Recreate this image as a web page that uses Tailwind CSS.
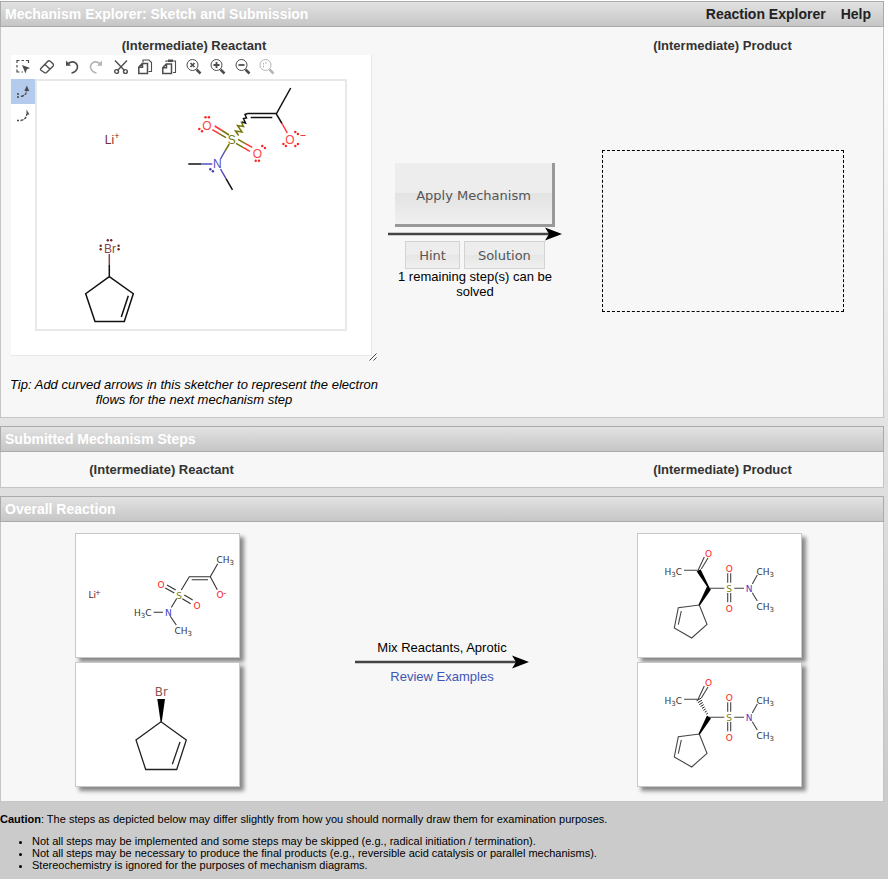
<!DOCTYPE html>
<html lang="en">
<head>
    <meta charset="UTF-8">
    <meta name="viewport" content="width=device-width, initial-scale=1.0">
    <title>Mechanism Explorer</title>
    <script src="https://cdn.jsdelivr.net/npm/@tailwindcss/browser@4"></script>
</head>
<body class="min-h-screen bg-linear-to-b from-white to-[#cbcbcb] to-90% pt-px font-['Liberation_Sans',Arial,sans-serif] text-[13px] leading-[15px] text-black">

    <!-- Shared drawings -->
    <svg class="hidden">
        <symbol id="arrow" viewBox="0 0 174 14">
            <path d="M0 7H162" stroke="#444" stroke-width="2.4"/>
            <path d="M157 0.5L174 7L157 13.5L161 7Z" fill="#000"/>
        </symbol>
        <symbol id="product" viewBox="0 0 163 123">
            <g stroke="#444" stroke-width="1.1" fill="none">
                <path d="M60.3 35.7L66.3 23M63.3 35L70 24M46 36.3H60.7M71 54.3H86.3M96.3 54.3H106"/>
                <path d="M89.7 39.3V48.7M92.7 39.3V48.7M89.7 59V68.3M92.7 59V68.3"/>
                <path d="M114.3 50L119.3 41M114.3 58.7L119.3 67"/>
                <path d="M61.3 71L69 90.3L53.7 104L36.3 94L40.3 73.7ZM43.3 77L40.3 90.7"/>
            </g>
            <path d="M69 52.5L73 55.5L61.8 71.5L60.5 70.7Z" fill="#000"/>
            <g font-family="DejaVu Sans, sans-serif" font-size="9" fill="#333">
                <text x="26.5" y="40.5">H<tspan font-size="7" dy="2">3</tspan><tspan dy="-2">C</tspan></text>
                <text x="118.5" y="40.5">CH<tspan font-size="7" dy="2">3</tspan></text>
                <text x="118.5" y="75.5">CH<tspan font-size="7" dy="2">3</tspan></text>
                <g text-anchor="middle">
                    <text x="70.5" y="22.5" fill="#ff2020">O</text>
                    <text x="91.3" y="37.5" fill="#ff2020">O</text>
                    <text x="91.3" y="78" fill="#ff2020">O</text>
                    <text x="91.2" y="57.5" fill="#808010">S</text>
                    <text x="111.2" y="57.5" fill="#4040c0">N</text>
                </g>
            </g>
        </symbol>
    </svg>

    <main class="mr-1">
        <!-- Sketch and submission -->
        <section>
            <header class="flex h-[26px] items-center justify-between border border-[#aaa] bg-linear-to-b from-[#e2e2e2] to-[#c6c6c6] pr-3 pl-1 text-[14px] font-bold">
                <h1 class="text-white">Mechanism Explorer: Sketch and Submission</h1>
                <nav class="flex gap-[15px] text-[#222]">
                    <a href="#">Reaction Explorer</a>
                    <a href="#">Help</a>
                </nav>
            </header>
            <div class="grid grid-cols-[377px_174px_1fr] gap-y-0.5 border-x border-b border-[#c5c5c5] bg-[#f7f7f7] pt-[11px] pb-[10px] pl-[10px]">
                <h2 class="mr-[11px] text-center font-bold text-[#333]">(Intermediate) Reactant</h2>
                <span></span>
                <h2 class="text-center font-bold text-[#333]">(Intermediate) Product</h2>

                <div class="mr-[11px]">
                    <div class="relative pr-[5px] pb-[5px]">
                        <div class="border-r border-b border-[#e8e8e8] bg-white pb-[24px]">
                            <div class="flex w-[268px] justify-between text-[#4d4d4d]">
                                <button class="grid size-6 place-items-center" aria-label="Select">
                                    <svg class="size-4" viewBox="0 0 16 16" fill="none" stroke="currentColor">
                                        <path d="M2 4V1.5H4.5M6.5 1.5H9M11 1.5H13.5V4M2 6V8.5M2 10.5V13H4.5M6.5 13H8" stroke-width="1.2"/>
                                        <path d="M7 6L15 9L11.7 10.5L10.5 14.5Z" fill="currentColor" stroke="none"/>
                                    </svg>
                                </button>
                                <button class="grid size-6 place-items-center" aria-label="Erase">
                                    <svg class="size-4" viewBox="0 0 16 16" fill="none" stroke="currentColor" stroke-width="1.4">
                                        <path d="M1.8 9.5L8.8 2.3Q10 1.3 11.2 2.3L14 4.8Q15 6 14 7.2L7.5 13.5Q6.5 14.3 5.3 13.5L2 11.3Q1 10.4 1.8 9.500ZM6 5.5L10.8 10"/>
                                    </svg>
                                </button>
                                <button class="grid size-6 place-items-center" aria-label="Undo">
                                    <svg class="size-4" viewBox="0 0 16 16" fill="none" stroke="currentColor" stroke-width="1.6">
                                        <path d="M3.5 5Q8 1.5 11.5 3.8Q14.5 6.5 13 10Q11.5 13.5 7.5 14"/>
                                        <path d="M2 1.5V6.8H7Z" fill="currentColor" stroke="none"/>
                                    </svg>
                                </button>
                                <button class="grid size-6 place-items-center text-[#b5b5b5]" aria-label="Redo" disabled>
                                    <svg class="size-4" viewBox="0 0 16 16" fill="none" stroke="currentColor" stroke-width="1.6">
                                        <path d="M12.5 5Q8 1.5 4.5 3.8Q1.5 6.5 3 10Q4.5 13.5 8.5 14"/>
                                        <path d="M14 1.5V6.8H9Z" fill="currentColor" stroke="none"/>
                                    </svg>
                                </button>
                                <button class="grid size-6 place-items-center" aria-label="Cut">
                                    <svg class="size-4" viewBox="0 0 16 16" fill="none" stroke="currentColor" stroke-width="1.4">
                                        <path d="M2 1.5L11.5 11.5M14 1.5L4.5 11.5"/>
                                        <circle cx="3.600" cy="12.500" r="1.900"/>
                                        <circle cx="12.400" cy="12.500" r="1.900"/>
                                    </svg>
                                </button>
                                <button class="grid size-6 place-items-center" aria-label="Copy">
                                    <svg class="size-4" viewBox="0 0 16 16" fill="none" stroke="currentColor" stroke-width="1.1">
                                        <path d="M6 3.5V1H12L14.5 3.5V12.5H11.5"/>
                                        <path d="M5.300 4.500H10.500V14.500H1.800V8ZM5.500 5V8.200H1.800" stroke-width="1.500"/>
                                    </svg>
                                </button>
                                <button class="grid size-6 place-items-center" aria-label="Paste">
                                    <svg class="size-4" viewBox="0 0 16 16" fill="none" stroke="currentColor" stroke-width="1.1">
                                        <path d="M5 3V2H14.500V13.500H12"/>
                                        <path d="M7 0.500H12V3H7Z" fill="currentColor" stroke="none"/>
                                        <path d="M5.300 5H10.500V14.500H1.800V8.500ZM5.500 5.500V8.700H1.800" stroke-width="1.500"/>
                                    </svg>
                                </button>
                                <button class="grid size-6 place-items-center" aria-label="Zoom reset">
                                    <svg class="size-4" viewBox="0 0 16 16" fill="none" stroke="currentColor">
                                        <circle cx="6.500" cy="6" r="5.500"/>
                                        <path d="M4.500 4L8.500 8M8.500 4L4.500 8" stroke-width="1.700"/>
                                        <path d="M10.500 10.500L14.500 14.500" stroke-width="2.500"/>
                                    </svg>
                                </button>
                                <button class="grid size-6 place-items-center" aria-label="Zoom in">
                                    <svg class="size-4" viewBox="0 0 16 16" fill="none" stroke="currentColor">
                                        <circle cx="6.500" cy="6" r="5.500"/>
                                        <path d="M3.500 6H9.500M6.500 3V9" stroke-width="1.800"/>
                                        <path d="M10.500 10.500L14.500 14.500" stroke-width="2.500"/>
                                    </svg>
                                </button>
                                <button class="grid size-6 place-items-center" aria-label="Zoom out">
                                    <svg class="size-4" viewBox="0 0 16 16" fill="none" stroke="currentColor">
                                        <circle cx="6.500" cy="6" r="5.500"/>
                                        <path d="M3.500 6H9.500" stroke-width="1.800"/>
                                        <path d="M10.500 10.500L14.500 14.500" stroke-width="2.500"/>
                                    </svg>
                                </button>
                                <button class="grid size-6 place-items-center text-[#b5b5b5]" aria-label="Zoom to selection" disabled>
                                    <svg class="size-4" viewBox="0 0 16 16" fill="none" stroke="currentColor">
                                        <circle cx="6.500" cy="6" r="5.500"/>
                                        <path d="M4.500 8.500V4H9" stroke-dasharray="2 1"/>
                                        <path d="M10.500 10.500L14.500 14.500" stroke-width="2.500"/>
                                    </svg>
                                </button>
                            </div>
                            <div class="flex">
                                <div class="flex w-6 flex-col text-[#4d4d4d]">
                                    <button class="grid h-[25px] w-6 place-items-center bg-[#b5cbed]" aria-label="Electron pair arrow">
                                        <svg class="size-4" viewBox="0 0 16 16" fill="none" stroke="currentColor">
                                            <path d="M6 12.500Q11.500 11.500 11.800 6" stroke-width="1.400" stroke-dasharray="3 1"/>
                                            <path d="M11.800 1.500L14.300 7H9.300Z" fill="currentColor" stroke="none"/>
                                            <path d="M3 9V11M3 12V14" stroke-width="1.600"/>
                                        </svg>
                                    </button>
                                    <button class="grid size-6 place-items-center" aria-label="Single electron arrow">
                                        <svg class="size-4" viewBox="0 0 16 16" fill="none" stroke="currentColor">
                                            <path d="M5.500 12.500Q11.500 11.500 11.800 6" stroke-width="1.400" stroke-dasharray="3 1"/>
                                            <path d="M11.500 1.500L14.500 6.500H11.500Z" fill="currentColor" stroke="none"/>
                                            <path d="M2 12.500H4" stroke-width="1.600"/>
                                        </svg>
                                    </button>
                                </div>
                                <svg class="h-[252px] w-[312px] border-2 border-[#e8e8e8]" viewBox="37 81 308 248" fill="none" role="img" aria-label="Reactant sketch">
                                    <!-- sulfonamide enolate -->
                                    <g stroke-width="1.500">
                                        <g stroke="#111">
                                            <path d="M290.700 88L276.300 114L282 123.500M247.300 113.500H276.300M250.700 117.600H272.300"/>
                                            <path d="M201 164H188.300M226 178.700L232.500 189.800"/>
                                            <path d="M242 122L245.500 123L243.500 118.500L246.500 118L245 114.500L247.500 113.500"/>
                                        </g>
                                        <g stroke="#f33">
                                            <path d="M282 123.500L287.300 133M214.700 126L222 130.500M212.300 129.700L219 133.700"/>
                                            <path d="M245 143.300L252.300 147.300M243 147.300L250 151.300"/>
                                        </g>
                                        <g stroke="#76760c">
                                            <path d="M222 130.500L229 135M219 133.700L226 137.700M238 139.300L245 143.300M236 143.300L243 147.300M229.300 144L225 151"/>
                                            <path d="M238.700 135.500L235.500 131L242 132L237.500 125.500L243.500 126.500L241 121.500"/>
                                        </g>
                                        <path d="M225 151L220.500 159M212.300 164H201M220.500 169L226 178.700" stroke="#5050c0"/>
                                    </g>
                                    <g font-family="Liberation Sans, Arial, sans-serif" font-size="12" text-anchor="middle">
                                        <text x="207" y="129.500" fill="#f44">O</text>
                                        <text x="257.300" y="158" fill="#f44">O</text>
                                        <text x="290" y="143.500" fill="#f44">O</text>
                                        <text x="231.700" y="144" fill="#76760c">S</text>
                                        <text x="217.300" y="168" fill="#5050c0">N</text>
                                        <text x="109.500" y="143.500" fill="#7a3030">Li</text>
                                        <text x="117" y="139" font-size="9" fill="#7a3030">+</text>
                                        <text x="110" y="252.500" fill="#8c4545">Br</text>
                                    </g>
                                    <path d="M300.500 135.500H305.500" stroke="#f33"/>
                                    <g fill="#f22">
                                        <circle cx="205.500" cy="117.300" r="1.200"/><circle cx="208.900" cy="117.300" r="1.200"/>
                                        <circle cx="199.300" cy="129" r="1.200"/><circle cx="202" cy="131.300" r="1.200"/>
                                        <circle cx="262.300" cy="146" r="1.200"/><circle cx="265" cy="148" r="1.200"/>
                                        <circle cx="255.700" cy="160.700" r="1.200"/><circle cx="259" cy="160.700" r="1.200"/>
                                        <circle cx="295.300" cy="132" r="1.200"/><circle cx="297.900" cy="134" r="1.200"/>
                                        <circle cx="283.400" cy="144" r="1.200"/><circle cx="285.900" cy="146" r="1.200"/>
                                        <circle cx="295.300" cy="146" r="1.200"/><circle cx="297.900" cy="144" r="1.200"/>
                                    </g>
                                    <g fill="#4040b0">
                                        <circle cx="210.300" cy="169.200" r="1.200"/><circle cx="212.900" cy="171.300" r="1.200"/>
                                    </g>
                                    <!-- bromocyclopentene -->
                                    <path d="M109.300 254V265" stroke="#8c4545" stroke-width="1.500"/>
                                    <path d="M109.300 265V276.700L133.300 293.700L124.300 321.500H95L85.700 293.700L109.300 276.700M128.300 295.700L121.300 317" stroke="#111" stroke-width="1.500"/>
                                    <g fill="#702828">
                                        <circle cx="107.800" cy="240.300" r="1.200"/><circle cx="111.200" cy="240.300" r="1.200"/>
                                        <circle cx="100.700" cy="245.700" r="1.200"/><circle cx="100.700" cy="249.200" r="1.200"/>
                                        <circle cx="118.600" cy="245.700" r="1.200"/><circle cx="118.600" cy="249.200" r="1.200"/>
                                    </g>
                                </svg>
                            </div>
                        </div>
                        <svg class="absolute right-0 bottom-0 size-2" viewBox="0 0 8 8" stroke="#444"><path d="M0.500 7.500L7.500 0.500M4.500 7.500L7.500 4.500"/></svg>
                    </div>
                    <p class="-mx-2 mt-4 text-center italic">Tip: Add curved arrows in this sketcher to represent the electron flows for the next mechanism step</p>
                </div>

                <div class="flex flex-col items-center self-center text-center font-['DejaVu_Sans',Verdana,sans-serif]">
                    <button class="h-16 w-40 border-r-3 border-b-3 border-[#999] bg-linear-to-b from-[#ededed] from-50% via-[#e3e3e3] via-50% to-[#f0f0f0] pt-1 text-[#555]">Apply Mechanism</button>
                    <svg class="h-3.5 w-full"><use href="#arrow"/></svg>
                    <div class="flex gap-1 text-[#555]">
                        <button class="h-7 border border-[#d3d3d3] bg-linear-to-b from-[#ededed] from-50% via-[#e6e6e6] via-50% to-[#f0f0f0] px-[13px]">Hint</button>
                        <button class="h-7 border border-[#d3d3d3] bg-linear-to-b from-[#ededed] from-50% via-[#e6e6e6] via-50% to-[#f0f0f0] px-[13px]">Solution</button>
                    </div>
                    <p class="font-['Liberation_Sans',Arial,sans-serif]">1 remaining step(s) can be solved</p>
                </div>

                <div class="h-[162px] w-[242px] self-center justify-self-center border border-dashed border-black"></div>
            </div>
        </section>

        <!-- Submitted steps -->
        <section class="mt-2">
            <header class="flex h-[26px] items-center border border-[#aaa] bg-linear-to-b from-[#e2e2e2] to-[#c6c6c6] pl-1">
                <h1 class="text-[14px] font-bold text-white">Submitted Mechanism Steps</h1>
            </header>
            <div class="grid grid-cols-[1fr_240px_1fr] border-x border-b border-[#c5c5c5] bg-[#f7f7f7] pt-[10px] pb-[10px] text-center font-bold text-[#333]">
                <h2>(Intermediate) Reactant</h2>
                <span></span>
                <h2>(Intermediate) Product</h2>
            </div>
        </section>

        <!-- Overall reaction -->
        <section class="mt-2">
            <header class="flex h-[26px] items-center border border-[#aaa] bg-linear-to-b from-[#e2e2e2] to-[#c6c6c6] pl-1">
                <h1 class="text-[14px] font-bold text-white">Overall Reaction</h1>
            </header>
            <div class="grid grid-cols-[1fr_240px_1fr] items-center border-x border-b border-[#c5c5c5] bg-[#f7f7f7] pt-[11px] pb-[14px]">
                <div class="mr-2 flex flex-col items-center gap-1">
                    <svg class="h-[125px] w-[165px] border border-[#c8c8c8] bg-white shadow-[4px_4px_4px_#888]" viewBox="0 0 163 123" role="img" aria-label="Lithium enolate">
                        <path d="M141.700 29.700L134.300 42.700L141.300 55.700M134.300 42.700H113.300L105.300 56M115.700 45.700H132M100.700 64.500L95.300 73.500M87 78.300H77.700M94.300 82.300L100.300 91M91 51L99.700 56M89.300 54L98.300 59M108.300 61L116.700 66M106.300 64.700L114.700 69.700" stroke="#333" stroke-width="1.100" fill="none"/>
                        <g font-family="DejaVu Sans, sans-serif" font-size="9" fill="#333">
                            <text x="58" y="81.500">H<tspan font-size="7" dy="2">3</tspan><tspan dy="-2">C</tspan></text>
                            <text x="140.500" y="28.500">CH<tspan font-size="7" dy="2">3</tspan></text>
                            <text x="98.500" y="99.500">CH<tspan font-size="7" dy="2">3</tspan></text>
                            <text x="12.500" y="64" fill="#6b1010">Li</text>
                            <text x="19" y="61" font-size="7" fill="#6b1010">+</text>
                            <text x="147" y="62" fill="#ff2020">-</text>
                            <g text-anchor="middle">
                                <text x="85" y="53.500" fill="#ff2020">O</text>
                                <text x="121" y="74.500" fill="#ff2020">O</text>
                                <text x="144" y="64" fill="#ff2020">O</text>
                                <text x="103" y="64.500" fill="#808010">S</text>
                                <text x="92.300" y="81.500" fill="#4040c0">N</text>
                            </g>
                        </g>
                    </svg>
                    <svg class="h-[125px] w-[165px] border border-[#c8c8c8] bg-white shadow-[4px_4px_4px_#888]" viewBox="0 0 163 123" role="img" aria-label="Bromocyclopentene">
                        <path d="M85 58.700L110.300 77L100.700 106.500H69.700L60 77ZM104 79L96.300 101.300" stroke="#222" stroke-width="1.300" fill="none"/>
                        <path d="M81.300 36H89L85.800 58.700H84.600Z"/>
                        <text x="85.300" y="32.500" font-family="DejaVu Sans, sans-serif" font-size="12" text-anchor="middle" fill="#8c5555">Br</text>
                    </svg>
                </div>
                <div class="flex flex-col items-center pt-1">
                    <p>Mix Reactants, Aprotic</p>
                    <svg class="h-3.5 w-[174px]"><use href="#arrow"/></svg>
                    <a href="#" class="text-[#3f55b5]">Review Examples</a>
                </div>
                <div class="mr-1.5 flex flex-col items-center gap-1">
                    <svg class="h-[125px] w-[165px] border border-[#c8c8c8] bg-white shadow-[4px_4px_4px_#888]" viewBox="0 0 163 123" role="img" aria-label="Product, wedge isomer">
                        <use href="#product"/>
                        <path d="M58.700 37.500L62.600 35.300L71.700 54L70.300 54.500Z"/>
                    </svg>
                    <svg class="h-[125px] w-[165px] border border-[#c8c8c8] bg-white shadow-[4px_4px_4px_#888]" viewBox="0 0 163 123" role="img" aria-label="Product, hash isomer">
                        <use href="#product"/>
                        <path d="M58.500 37.800L63 35.200M59.800 39.700L63.900 37.300M61.200 41.600L64.800 39.500M62.600 43.500L65.700 41.700M64 45.400L66.600 43.900M65.400 47.300L67.600 46M66.800 49.200L68.700 48.100M68.200 51.100L69.800 50.200" stroke="#222" stroke-width="1"/>
                    </svg>
                </div>
            </div>
        </section>
    </main>

    <footer class="pt-[11px] text-[11px] leading-[12px]">
        <p><b>Caution</b>: The steps as depicted below may differ slightly from how you should normally draw them for examination purposes.</p>
        <ul class="mt-[10px] list-disc pl-8">
            <li>Not all steps may be implemented and some steps may be skipped (e.g., radical initiation / termination).</li>
            <li>Not all steps may be necessary to produce the final products (e.g., reversible acid catalysis or parallel mechanisms).</li>
            <li>Stereochemistry is ignored for the purposes of mechanism diagrams.</li>
        </ul>
    </footer>
</body>
</html>
